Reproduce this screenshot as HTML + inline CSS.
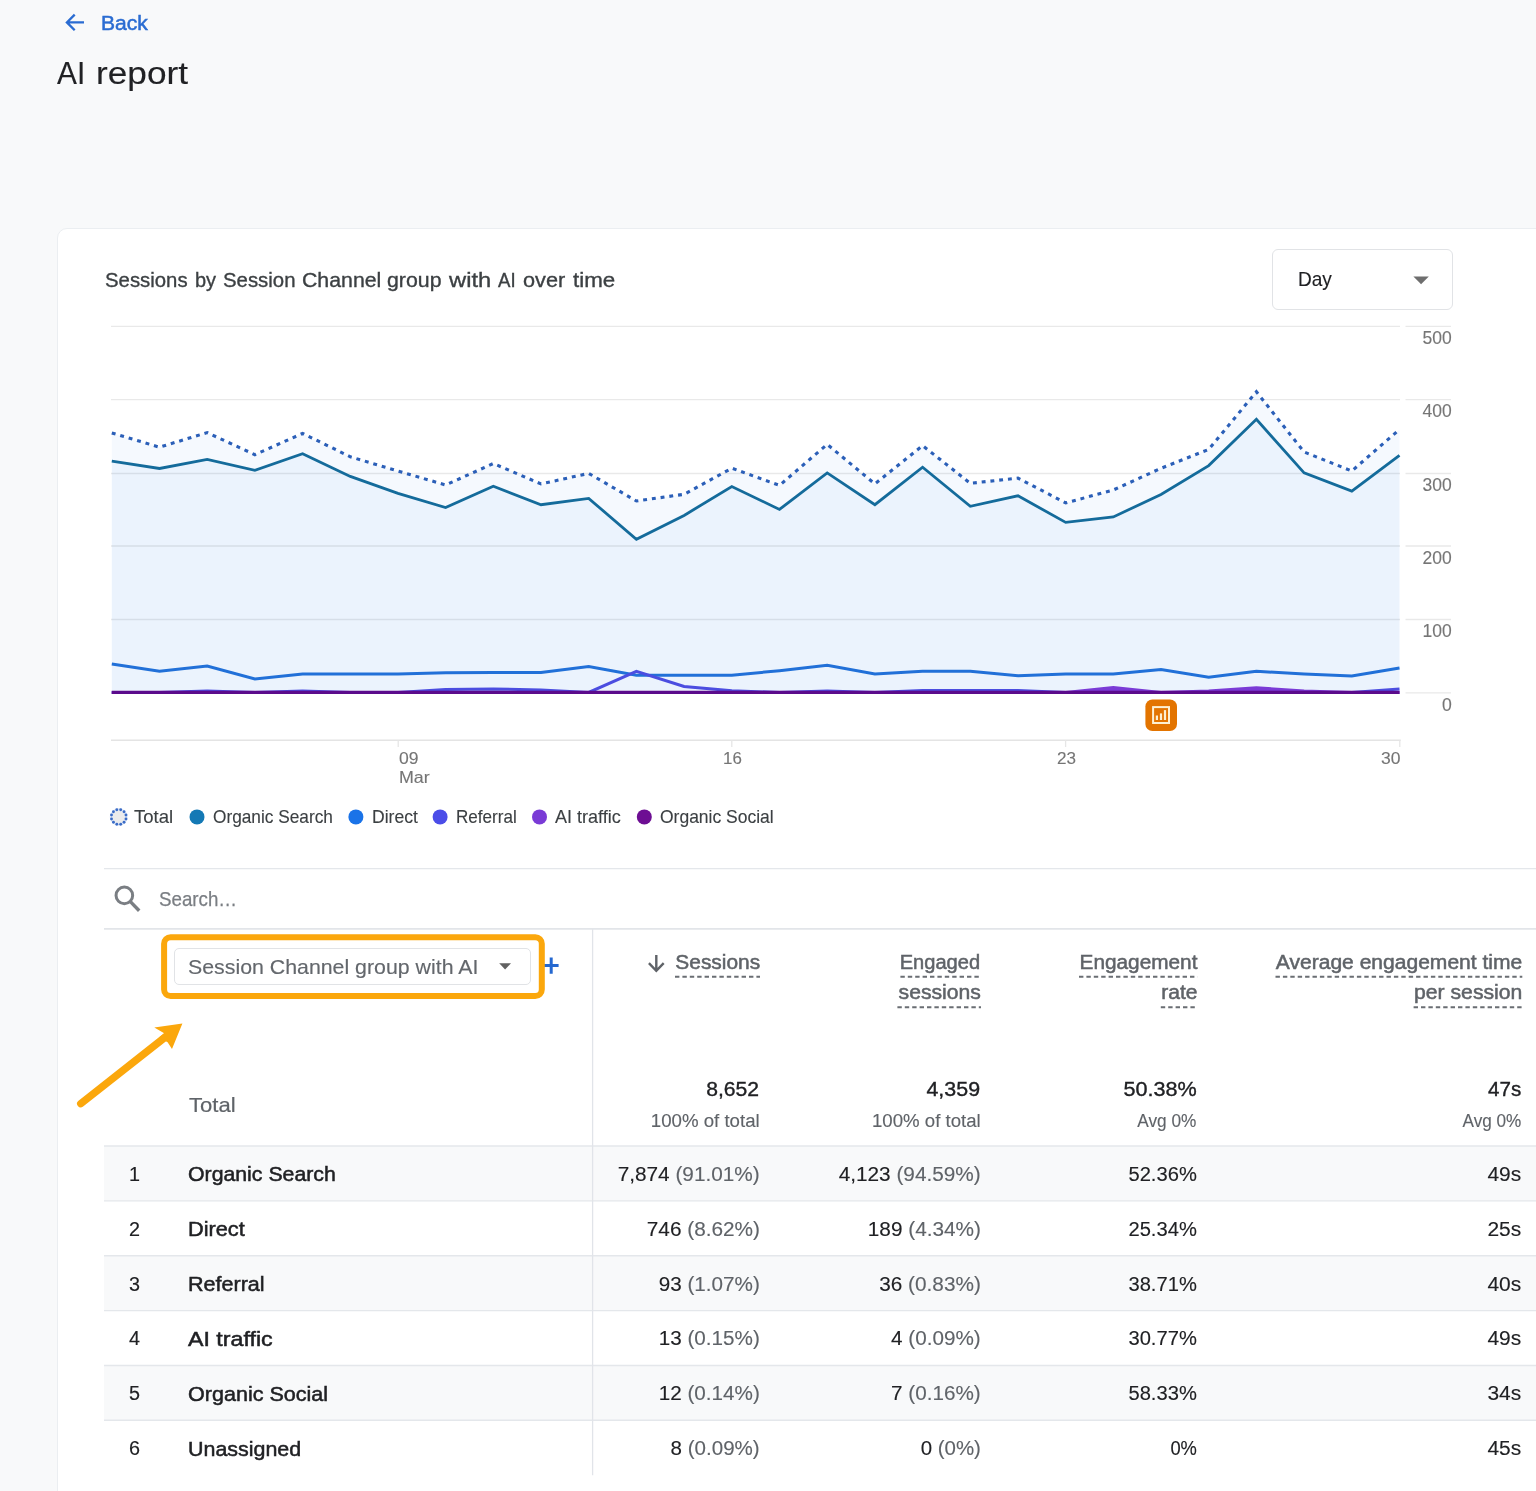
<!DOCTYPE html>
<html><head><meta charset="utf-8"><title>AI report</title>
<style>
html,body{margin:0;padding:0}
body{width:1536px;height:1491px;overflow:hidden;background:#f8f9fa;position:relative;font-family:"Liberation Sans", Arial, sans-serif}
.abs{position:absolute}
.t{position:absolute;white-space:pre}
.card{position:absolute;left:57px;top:227.5px;width:1600px;height:1400px;background:#fff;border:1.7px solid #ebeef1;border-radius:10px;box-sizing:border-box}
.day{position:absolute;left:1272px;top:249.4px;width:180.8px;height:60.3px;box-sizing:border-box;border:1.4px solid #e1e3e6;border-radius:6px;background:#fff}
.sel{position:absolute;left:173.6px;top:947.9px;width:357px;height:36.8px;box-sizing:border-box;border:1.3px solid #e1e3e6;border-radius:5px;background:#fff}
</style></head><body>
<div class="card"></div>
<div class="day"></div>
<svg class="abs" style="left:0;top:0" width="1536" height="1491" viewBox="0 0 1536 1491"><rect x="104" y="1146.00" width="1440" height="54.86" fill="#f8f9fa"/>
<rect x="104" y="1255.72" width="1440" height="54.86" fill="#f8f9fa"/>
<rect x="104" y="1365.44" width="1440" height="54.86" fill="#f8f9fa"/>
<line x1="104" x2="1540" y1="1146.00" y2="1146.00" stroke="#e4e7eb" stroke-width="1.4"/>
<line x1="104" x2="1540" y1="1200.86" y2="1200.86" stroke="#e4e7eb" stroke-width="1.4"/>
<line x1="104" x2="1540" y1="1255.72" y2="1255.72" stroke="#e4e7eb" stroke-width="1.4"/>
<line x1="104" x2="1540" y1="1310.58" y2="1310.58" stroke="#e4e7eb" stroke-width="1.4"/>
<line x1="104" x2="1540" y1="1365.44" y2="1365.44" stroke="#e4e7eb" stroke-width="1.4"/>
<line x1="104" x2="1540" y1="1420.30" y2="1420.30" stroke="#e4e7eb" stroke-width="1.4"/>
<line x1="104" x2="1540" y1="868.6" y2="868.6" stroke="#e4e7eb" stroke-width="1.4"/>
<line x1="104" x2="1540" y1="928.9" y2="928.9" stroke="#e2e5e9" stroke-width="1.7"/>
<line x1="592.6" x2="592.6" y1="929" y2="1475.2" stroke="#e1e4e9" stroke-width="1.3"/></svg>
<div class="sel"></div>
<svg class="abs" style="left:0;top:0" width="1536" height="1491" viewBox="0 0 1536 1491">
<line x1="111" x2="1400" y1="326.3" y2="326.3" stroke="#e9e9e9" stroke-width="1.3"/>
<line x1="1405.5" x2="1451" y1="326.3" y2="326.3" stroke="#e9e9e9" stroke-width="1.3"/>
<line x1="111" x2="1400" y1="399.7" y2="399.7" stroke="#e9e9e9" stroke-width="1.3"/>
<line x1="1405.5" x2="1451" y1="399.7" y2="399.7" stroke="#e9e9e9" stroke-width="1.3"/>
<line x1="111" x2="1400" y1="473.5" y2="473.5" stroke="#e9e9e9" stroke-width="1.3"/>
<line x1="1405.5" x2="1451" y1="473.5" y2="473.5" stroke="#e9e9e9" stroke-width="1.3"/>
<line x1="111" x2="1400" y1="546.0" y2="546.0" stroke="#e9e9e9" stroke-width="1.3"/>
<line x1="1405.5" x2="1451" y1="546.0" y2="546.0" stroke="#e9e9e9" stroke-width="1.3"/>
<line x1="111" x2="1400" y1="619.5" y2="619.5" stroke="#e9e9e9" stroke-width="1.3"/>
<line x1="1405.5" x2="1451" y1="619.5" y2="619.5" stroke="#e9e9e9" stroke-width="1.3"/>
<line x1="111" x2="1400" y1="692.9" y2="692.9" stroke="#e9e9e9" stroke-width="1.3"/>
<line x1="1405.5" x2="1451" y1="692.9" y2="692.9" stroke="#e9e9e9" stroke-width="1.3"/>
<path d="M111.8,692.4 L111.8,432.9 L159.5,447.2 L207.2,432.6 L254.9,454.7 L302.6,433.4 L350.3,456.8 L398.0,471.0 L445.6,485.0 L493.3,463.5 L541.0,483.9 L588.7,473.4 L636.4,501.0 L684.1,494.3 L731.8,468.2 L779.5,485.4 L827.2,444.3 L874.9,483.9 L922.6,445.6 L970.3,483.3 L1018.0,478.1 L1065.7,502.9 L1113.3,490.0 L1161.0,468.3 L1208.7,449.4 L1256.4,391.8 L1304.1,452.0 L1351.8,471.0 L1399.5,429.4 L1399.5,692.4 Z" fill="#1a73e8" fill-opacity="0.042"/>
<path d="M111.8,692.4 L111.8,461.2 L159.5,468.5 L207.2,459.4 L254.9,470.4 L302.6,453.7 L350.3,476.4 L398.0,493.3 L445.6,507.5 L493.3,486.3 L541.0,504.7 L588.7,498.4 L636.4,539.3 L684.1,515.4 L731.8,486.5 L779.5,509.4 L827.2,472.9 L874.9,504.7 L922.6,467.2 L970.3,506.3 L1018.0,495.8 L1065.7,522.4 L1113.3,517.0 L1161.0,494.4 L1208.7,465.6 L1256.4,419.3 L1304.1,472.9 L1351.8,491.1 L1399.5,455.4 L1399.5,692.4 Z" fill="#1a73e8" fill-opacity="0.042"/>
<line x1="111" x2="1400.8" y1="740.3" y2="740.3" stroke="#e4e4e4" stroke-width="1.5"/>
<line x1="398.2" x2="398.2" y1="740" y2="747" stroke="#e6e6e6" stroke-width="1.3"/>
<line x1="731.8" x2="731.8" y1="740" y2="747" stroke="#e6e6e6" stroke-width="1.3"/>
<line x1="1065.6" x2="1065.6" y1="740" y2="747" stroke="#e6e6e6" stroke-width="1.3"/>
<line x1="1399.8" x2="1399.8" y1="740" y2="747" stroke="#e6e6e6" stroke-width="1.3"/>
<polyline points="111.8,432.9 159.5,447.2 207.2,432.6 254.9,454.7 302.6,433.4 350.3,456.8 398.0,471.0 445.6,485.0 493.3,463.5 541.0,483.9 588.7,473.4 636.4,501.0 684.1,494.3 731.8,468.2 779.5,485.4 827.2,444.3 874.9,483.9 922.6,445.6 970.3,483.3 1018.0,478.1 1065.7,502.9 1113.3,490.0 1161.0,468.3 1208.7,449.4 1256.4,391.8 1304.1,452.0 1351.8,471.0 1399.5,429.4" fill="none" stroke="#2b5fb8" stroke-width="3.1" stroke-dasharray="3.9 4.9"/>
<polyline points="111.8,461.2 159.5,468.5 207.2,459.4 254.9,470.4 302.6,453.7 350.3,476.4 398.0,493.3 445.6,507.5 493.3,486.3 541.0,504.7 588.7,498.4 636.4,539.3 684.1,515.4 731.8,486.5 779.5,509.4 827.2,472.9 874.9,504.7 922.6,467.2 970.3,506.3 1018.0,495.8 1065.7,522.4 1113.3,517.0 1161.0,494.4 1208.7,465.6 1256.4,419.3 1304.1,472.9 1351.8,491.1 1399.5,455.4" fill="none" stroke="#146b9b" stroke-width="2.8" stroke-linejoin="miter"/>
<polyline points="111.8,664.0 159.5,671.3 207.2,666.0 254.9,679.0 302.6,673.9 350.3,673.9 398.0,673.9 445.6,672.7 493.3,672.5 541.0,672.5 588.7,666.6 636.4,675.2 684.1,675.2 731.8,675.2 779.5,670.7 827.2,665.3 874.9,673.9 922.6,671.3 970.3,671.3 1018.0,675.7 1065.7,673.9 1113.3,673.9 1161.0,669.4 1208.7,677.2 1256.4,671.3 1304.1,673.9 1351.8,675.9 1399.5,667.9" fill="none" stroke="#2170d8" stroke-width="3"/>
<polyline points="111.8,692.4 159.5,692.4 207.2,691.0 254.9,692.4 302.6,691.0 350.3,692.4 398.0,692.4 445.6,689.5 493.3,689.0 541.0,690.0 588.7,692.4 636.4,671.3 684.1,686.4 731.8,690.8 779.5,692.4 827.2,691.0 874.9,692.4 922.6,690.5 970.3,690.5 1018.0,690.5 1065.7,692.4 1113.3,692.4 1161.0,692.4 1208.7,692.4 1256.4,692.4 1304.1,692.4 1351.8,692.4 1399.5,689.0" fill="none" stroke="#4b4de0" stroke-width="3"/>
<polyline points="111.8,692.4 159.5,692.4 207.2,692.4 254.9,692.4 302.6,692.4 350.3,692.4 398.0,692.4 445.6,692.4 493.3,692.4 541.0,692.4 588.7,692.4 636.4,692.4 684.1,692.4 731.8,692.4 779.5,692.4 827.2,692.4 874.9,692.4 922.6,692.4 970.3,692.4 1018.0,692.4 1065.7,692.4 1113.3,687.6 1161.0,692.4 1208.7,691.0 1256.4,687.7 1304.1,691.0 1351.8,692.4 1399.5,692.4" fill="#7a3bd6" stroke="#7a3bd6" stroke-width="3"/>
<polyline points="111.8,692.4 159.5,692.4 207.2,692.4 254.9,692.4 302.6,692.4 350.3,692.4 398.0,692.4 445.6,692.4 493.3,692.4 541.0,692.4 588.7,692.4 636.4,692.4 684.1,692.4 731.8,692.4 779.5,692.4 827.2,692.4 874.9,692.4 922.6,692.4 970.3,692.4 1018.0,692.4 1065.7,692.4 1113.3,692.4 1161.0,692.4 1208.7,692.4 1256.4,692.4 1304.1,692.4 1351.8,692.4 1399.5,692.4" fill="none" stroke="#5b0b8c" stroke-width="3.3"/>
<rect x="1145.4" y="699.4" width="31.6" height="31.6" rx="7" fill="#e37400"/>
<rect x="1153.1" y="707.1" width="15.9" height="15.9" fill="none" stroke="#fdf0d2" stroke-width="2"/>
<rect x="1155.8" y="715.5" width="2.2" height="4.5" fill="#fdf0d2"/><rect x="1159.9" y="713.4" width="2.2" height="6.6" fill="#fdf0d2"/><rect x="1163.9" y="710.1" width="2.2" height="9.9" fill="#fdf0d2"/>
<circle cx="118.75" cy="817" r="9" fill="#e4ebf8"/><circle cx="118.75" cy="817" r="6.2" fill="#ebebec"/>
<circle cx="125.99" cy="818.94" r="1.45" fill="#3b6cc6"/>
<circle cx="124.05" cy="822.30" r="1.45" fill="#3b6cc6"/>
<circle cx="120.69" cy="824.24" r="1.45" fill="#3b6cc6"/>
<circle cx="116.81" cy="824.24" r="1.45" fill="#3b6cc6"/>
<circle cx="113.45" cy="822.30" r="1.45" fill="#3b6cc6"/>
<circle cx="111.51" cy="818.94" r="1.45" fill="#3b6cc6"/>
<circle cx="111.51" cy="815.06" r="1.45" fill="#3b6cc6"/>
<circle cx="113.45" cy="811.70" r="1.45" fill="#3b6cc6"/>
<circle cx="116.81" cy="809.76" r="1.45" fill="#3b6cc6"/>
<circle cx="120.69" cy="809.76" r="1.45" fill="#3b6cc6"/>
<circle cx="124.05" cy="811.70" r="1.45" fill="#3b6cc6"/>
<circle cx="125.99" cy="815.06" r="1.45" fill="#3b6cc6"/>
<circle cx="197.0" cy="816.9" r="7.5" fill="#1479b5"/>
<circle cx="355.9" cy="816.9" r="7.5" fill="#1a73e8"/>
<circle cx="440.1" cy="816.9" r="7.5" fill="#4b4de8"/>
<circle cx="539.5" cy="816.9" r="7.5" fill="#7a3bd6"/>
<circle cx="644.3" cy="816.9" r="7.5" fill="#6d0e93"/>
<path d="M1413.4 276.4 L1428.8 276.4 L1421.1 284.2 Z" fill="#6e6e6e"/>
<path d="M84 22.4 H67.5 M74.7 14.6 L66.9 22.4 L74.7 30.2" fill="none" stroke="#2a6cd2" stroke-width="2.3"/>
<circle cx="124.35" cy="895.4" r="8.3" fill="none" stroke="#7a7e83" stroke-width="3"/><path d="M130.4 901.6 L139.2 910.8" stroke="#7a7e83" stroke-width="3.4" stroke-linecap="butt"/>
<path d="M499.2 963.3 L511 963.3 L505.1 969.4 Z" fill="#616161"/>
<path d="M544 965.4 H558.6 M551.2 957.5 V973.8" stroke="#2568d0" stroke-width="3"/>
<path d="M656.3 955 V970 M648.9 963.2 L656.3 970.8 L663.7 963.2" fill="none" stroke="#5f6368" stroke-width="2.4"/>
<line x1="675.0" x2="760.0" y1="976.8" y2="976.8" stroke="#6a6e73" stroke-width="1.9" stroke-dasharray="4.4 3"/>
<line x1="900.4" x2="981.0" y1="976.8" y2="976.8" stroke="#6a6e73" stroke-width="1.9" stroke-dasharray="4.4 3"/>
<line x1="897.4" x2="981.0" y1="1007.2" y2="1007.2" stroke="#6a6e73" stroke-width="1.9" stroke-dasharray="4.4 3"/>
<line x1="1079.0" x2="1197.5" y1="976.8" y2="976.8" stroke="#6a6e73" stroke-width="1.9" stroke-dasharray="4.4 3"/>
<line x1="1160.8" x2="1197.5" y1="1007.2" y2="1007.2" stroke="#6a6e73" stroke-width="1.9" stroke-dasharray="4.4 3"/>
<line x1="1275.5" x2="1522.3" y1="976.8" y2="976.8" stroke="#6a6e73" stroke-width="1.9" stroke-dasharray="4.4 3"/>
<line x1="1413.6" x2="1522.3" y1="1007.2" y2="1007.2" stroke="#6a6e73" stroke-width="1.9" stroke-dasharray="4.4 3"/>
<rect x="164.1" y="937.2" width="377.7" height="58.8" rx="6.5" fill="none" stroke="#fba70c" stroke-width="6"/>
<path d="M80.8 1103.6 L166 1036.5" stroke="#fba70c" stroke-width="7.5" stroke-linecap="round"/>
<path d="M182.4 1023.4 L154.3 1027.6 L164.2 1033.2 L159 1037.5 L167.6 1042.3 L172 1049 Z" fill="#fba70c"/>
</svg>
<div style="position:absolute;left:0;top:0;width:1536px;height:1491px;will-change:transform">
<span class="t" style="top:10.77px;font-size:20px;line-height:24px;color:#2a6cd2;left:101.20px;transform-origin:0 50%;transform:scaleX(1.0524);-webkit-text-stroke:0.5px #2a6cd2;">Back</span>
<span class="t" style="top:55.36px;font-size:31px;line-height:37px;color:#202124;left:57.20px;transform-origin:0 50%;transform:scaleX(0.9626);-webkit-text-stroke:0.12px #202124;">AI</span>
<span class="t" style="top:55.36px;font-size:31px;line-height:37px;color:#202124;left:96.20px;transform-origin:0 50%;transform:scaleX(1.1360);-webkit-text-stroke:0.12px #202124;">report</span>
<span class="t" style="top:266.89px;font-size:20.8px;line-height:25px;color:#3c4043;left:104.90px;transform-origin:0 50%;transform:scaleX(0.9788);-webkit-text-stroke:0.35px #3c4043;">Sessions</span>
<span class="t" style="top:266.89px;font-size:20.8px;line-height:25px;color:#3c4043;left:194.90px;transform-origin:0 50%;transform:scaleX(0.9605);-webkit-text-stroke:0.35px #3c4043;">by</span>
<span class="t" style="top:266.89px;font-size:20.8px;line-height:25px;color:#3c4043;left:223.00px;transform-origin:0 50%;transform:scaleX(0.9797);-webkit-text-stroke:0.35px #3c4043;">Session</span>
<span class="t" style="top:266.89px;font-size:20.8px;line-height:25px;color:#3c4043;left:302.10px;transform-origin:0 50%;transform:scaleX(1.0234);-webkit-text-stroke:0.35px #3c4043;">Channel</span>
<span class="t" style="top:266.89px;font-size:20.8px;line-height:25px;color:#3c4043;left:387.20px;transform-origin:0 50%;transform:scaleX(1.0244);-webkit-text-stroke:0.35px #3c4043;">group</span>
<span class="t" style="top:266.89px;font-size:20.8px;line-height:25px;color:#3c4043;left:448.80px;transform-origin:0 50%;transform:scaleX(1.1410);-webkit-text-stroke:0.35px #3c4043;">with</span>
<span class="t" style="top:266.89px;font-size:20.8px;line-height:25px;color:#3c4043;left:498.00px;transform-origin:0 50%;transform:scaleX(0.8954);-webkit-text-stroke:0.35px #3c4043;">AI</span>
<span class="t" style="top:266.89px;font-size:20.8px;line-height:25px;color:#3c4043;left:522.60px;transform-origin:0 50%;transform:scaleX(1.0428);-webkit-text-stroke:0.35px #3c4043;">over</span>
<span class="t" style="top:266.89px;font-size:20.8px;line-height:25px;color:#3c4043;left:572.70px;transform-origin:0 50%;transform:scaleX(1.0739);-webkit-text-stroke:0.35px #3c4043;">time</span>
<span class="t" style="top:267.13px;font-size:20.4px;line-height:24px;color:#202124;left:1297.50px;transform-origin:0 50%;transform:scaleX(0.9348);-webkit-text-stroke:0.12px #202124;">Day</span>
<span class="t" style="top:327.73px;font-size:17.8px;line-height:21px;color:#757575;right:84.00px;transform-origin:100% 50%;transform:scaleX(0.9841);-webkit-text-stroke:0.12px #757575;">500</span>
<span class="t" style="top:401.43px;font-size:17.8px;line-height:21px;color:#757575;right:84.00px;transform-origin:100% 50%;transform:scaleX(0.9841);-webkit-text-stroke:0.12px #757575;">400</span>
<span class="t" style="top:475.23px;font-size:17.8px;line-height:21px;color:#757575;right:84.00px;transform-origin:100% 50%;transform:scaleX(0.9841);-webkit-text-stroke:0.12px #757575;">300</span>
<span class="t" style="top:547.73px;font-size:17.8px;line-height:21px;color:#757575;right:84.00px;transform-origin:100% 50%;transform:scaleX(0.9841);-webkit-text-stroke:0.12px #757575;">200</span>
<span class="t" style="top:621.23px;font-size:17.8px;line-height:21px;color:#757575;right:84.00px;transform-origin:100% 50%;transform:scaleX(0.9841);-webkit-text-stroke:0.12px #757575;">100</span>
<span class="t" style="top:694.63px;font-size:17.8px;line-height:21px;color:#757575;right:84.00px;transform-origin:100% 50%;transform:scaleX(0.9908);-webkit-text-stroke:0.12px #757575;">0</span>
<span class="t" style="top:748.08px;font-size:16.5px;line-height:20px;color:#757575;left:398.75px;transform-origin:0 50%;transform:scaleX(1.0649);-webkit-text-stroke:0.12px #757575;">09</span>
<span class="t" style="top:748.08px;font-size:16.5px;line-height:20px;color:#757575;left:723.20px;transform-origin:0 50%;transform:scaleX(1.0240);-webkit-text-stroke:0.12px #757575;">16</span>
<span class="t" style="top:748.08px;font-size:16.5px;line-height:20px;color:#757575;left:1056.60px;transform-origin:0 50%;transform:scaleX(1.0349);-webkit-text-stroke:0.12px #757575;">23</span>
<span class="t" style="top:748.08px;font-size:16.5px;line-height:20px;color:#757575;left:1380.50px;transform-origin:0 50%;transform:scaleX(1.0621);-webkit-text-stroke:0.12px #757575;">30</span>
<span class="t" style="top:766.98px;font-size:16.5px;line-height:20px;color:#757575;left:398.75px;transform-origin:0 50%;transform:scaleX(1.0819);-webkit-text-stroke:0.12px #757575;">Mar</span>
<span class="t" style="top:805.69px;font-size:18.5px;line-height:22px;color:#3c4043;left:134.30px;transform-origin:0 50%;transform:scaleX(1.0031);-webkit-text-stroke:0.12px #3c4043;">Total</span>
<span class="t" style="top:805.69px;font-size:18.5px;line-height:22px;color:#3c4043;left:212.90px;transform-origin:0 50%;transform:scaleX(0.9327);-webkit-text-stroke:0.12px #3c4043;">Organic Search</span>
<span class="t" style="top:805.69px;font-size:18.5px;line-height:22px;color:#3c4043;left:371.80px;transform-origin:0 50%;transform:scaleX(0.9480);-webkit-text-stroke:0.12px #3c4043;">Direct</span>
<span class="t" style="top:805.69px;font-size:18.5px;line-height:22px;color:#3c4043;left:456.10px;transform-origin:0 50%;transform:scaleX(0.9223);-webkit-text-stroke:0.12px #3c4043;">Referral</span>
<span class="t" style="top:805.69px;font-size:18.5px;line-height:22px;color:#3c4043;left:555.40px;transform-origin:0 50%;transform:scaleX(0.9746);-webkit-text-stroke:0.12px #3c4043;">AI traffic</span>
<span class="t" style="top:805.69px;font-size:18.5px;line-height:22px;color:#3c4043;left:660.40px;transform-origin:0 50%;transform:scaleX(0.9450);-webkit-text-stroke:0.12px #3c4043;">Organic Social</span>
<span class="t" style="top:886.02px;font-size:21px;line-height:25px;color:#7a7e83;left:158.60px;transform-origin:0 50%;transform:scaleX(0.8921);-webkit-text-stroke:0.25px #7a7e83;">Search…</span>
<span class="t" style="top:953.69px;font-size:20.8px;line-height:25px;color:#63676c;left:187.90px;transform-origin:0 50%;transform:scaleX(1.0252);-webkit-text-stroke:0.15px #63676c;">Session Channel group with AI</span>
<span class="t" style="top:950.17px;font-size:20px;line-height:24px;color:#5f6368;right:776.00px;transform-origin:100% 50%;transform:scaleX(1.0449);-webkit-text-stroke:0.5px #5f6368;">Sessions</span>
<span class="t" style="top:950.17px;font-size:20px;line-height:24px;color:#5f6368;right:555.50px;transform-origin:100% 50%;transform:scaleX(1.0040);-webkit-text-stroke:0.5px #5f6368;">Engaged</span>
<span class="t" style="top:950.17px;font-size:20px;line-height:24px;color:#5f6368;right:338.70px;transform-origin:100% 50%;transform:scaleX(1.0395);-webkit-text-stroke:0.5px #5f6368;">Engagement</span>
<span class="t" style="top:950.17px;font-size:20px;line-height:24px;color:#5f6368;right:13.90px;transform-origin:100% 50%;transform:scaleX(1.0519);-webkit-text-stroke:0.5px #5f6368;">Average engagement time</span>
<span class="t" style="top:980.47px;font-size:20px;line-height:24px;color:#5f6368;right:555.50px;transform-origin:100% 50%;transform:scaleX(1.0564);-webkit-text-stroke:0.5px #5f6368;">sessions</span>
<span class="t" style="top:980.47px;font-size:20px;line-height:24px;color:#5f6368;right:338.70px;transform-origin:100% 50%;transform:scaleX(1.0531);-webkit-text-stroke:0.5px #5f6368;">rate</span>
<span class="t" style="top:980.47px;font-size:20px;line-height:24px;color:#5f6368;right:13.90px;transform-origin:100% 50%;transform:scaleX(1.0579);-webkit-text-stroke:0.5px #5f6368;">per session</span>
<span class="t" style="top:1076.87px;font-size:20px;line-height:24px;color:#202124;right:776.80px;transform-origin:100% 50%;transform:scaleX(1.0567);-webkit-text-stroke:0.35px #202124;">8,652</span>
<span class="t" style="top:1076.87px;font-size:20px;line-height:24px;color:#202124;right:555.80px;transform-origin:100% 50%;transform:scaleX(1.0707);-webkit-text-stroke:0.35px #202124;">4,359</span>
<span class="t" style="top:1076.87px;font-size:20px;line-height:24px;color:#202124;right:339.40px;transform-origin:100% 50%;transform:scaleX(1.0804);-webkit-text-stroke:0.35px #202124;">50.38%</span>
<span class="t" style="top:1076.87px;font-size:20px;line-height:24px;color:#202124;right:14.90px;transform-origin:100% 50%;transform:scaleX(1.0295);-webkit-text-stroke:0.35px #202124;">47s</span>
<span class="t" style="top:1091.72px;font-size:21px;line-height:25px;color:#5f6368;left:188.90px;transform-origin:0 50%;transform:scaleX(1.0505);-webkit-text-stroke:0.2px #5f6368;">Total</span>
<span class="t" style="top:1111.00px;font-size:17.6px;line-height:21px;color:#5f6368;right:776.80px;transform-origin:100% 50%;transform:scaleX(1.0603);-webkit-text-stroke:0.12px #5f6368;">100% of total</span>
<span class="t" style="top:1111.00px;font-size:17.6px;line-height:21px;color:#5f6368;right:555.80px;transform-origin:100% 50%;transform:scaleX(1.0584);-webkit-text-stroke:0.12px #5f6368;">100% of total</span>
<span class="t" style="top:1111.00px;font-size:17.6px;line-height:21px;color:#5f6368;right:339.40px;transform-origin:100% 50%;transform:scaleX(0.9796);-webkit-text-stroke:0.12px #5f6368;">Avg 0%</span>
<span class="t" style="top:1111.00px;font-size:17.6px;line-height:21px;color:#5f6368;right:14.90px;transform-origin:100% 50%;transform:scaleX(0.9747);-webkit-text-stroke:0.12px #5f6368;">Avg 0%</span>
<span class="t" style="top:1161.87px;font-size:20px;line-height:24px;color:#202124;left:128.60px;transform-origin:0 50%;transform:scaleX(0.9888);-webkit-text-stroke:0.15px #202124;">1</span>
<span class="t" style="top:1161.20px;font-size:20.5px;line-height:25px;color:#202124;left:188.20px;transform-origin:0 50%;transform:scaleX(1.0376);-webkit-text-stroke:0.5px #202124;">Organic Search</span>
<span class="t" style="top:1161.87px;font-size:20px;line-height:24px;color:#202124;right:776.50px;transform-origin:100% 50%;transform:scaleX(1.0390);-webkit-text-stroke:0.12px #202124;">7,874 <span style="color:#5f6368;-webkit-text-stroke-color:#5f6368">(91.01%)</span></span>
<span class="t" style="top:1161.87px;font-size:20px;line-height:24px;color:#202124;right:555.50px;transform-origin:100% 50%;transform:scaleX(1.0390);-webkit-text-stroke:0.12px #202124;">4,123 <span style="color:#5f6368;-webkit-text-stroke-color:#5f6368">(94.59%)</span></span>
<span class="t" style="top:1161.87px;font-size:20px;line-height:24px;color:#202124;right:339.20px;transform-origin:100% 50%;transform:scaleX(1.0082);-webkit-text-stroke:0.12px #202124;">52.36%</span>
<span class="t" style="top:1161.87px;font-size:20px;line-height:24px;color:#202124;right:14.90px;transform-origin:100% 50%;transform:scaleX(1.0481);-webkit-text-stroke:0.12px #202124;">49s</span>
<span class="t" style="top:1216.73px;font-size:20px;line-height:24px;color:#202124;left:128.60px;transform-origin:0 50%;transform:scaleX(0.9888);-webkit-text-stroke:0.15px #202124;">2</span>
<span class="t" style="top:1216.06px;font-size:20.5px;line-height:25px;color:#202124;left:188.20px;transform-origin:0 50%;transform:scaleX(1.0608);-webkit-text-stroke:0.5px #202124;">Direct</span>
<span class="t" style="top:1216.73px;font-size:20px;line-height:24px;color:#202124;right:776.50px;transform-origin:100% 50%;transform:scaleX(1.0388);-webkit-text-stroke:0.12px #202124;">746 <span style="color:#5f6368;-webkit-text-stroke-color:#5f6368">(8.62%)</span></span>
<span class="t" style="top:1216.73px;font-size:20px;line-height:24px;color:#202124;right:555.50px;transform-origin:100% 50%;transform:scaleX(1.0388);-webkit-text-stroke:0.12px #202124;">189 <span style="color:#5f6368;-webkit-text-stroke-color:#5f6368">(4.34%)</span></span>
<span class="t" style="top:1216.73px;font-size:20px;line-height:24px;color:#202124;right:339.20px;transform-origin:100% 50%;transform:scaleX(1.0082);-webkit-text-stroke:0.12px #202124;">25.34%</span>
<span class="t" style="top:1216.73px;font-size:20px;line-height:24px;color:#202124;right:14.90px;transform-origin:100% 50%;transform:scaleX(1.0481);-webkit-text-stroke:0.12px #202124;">25s</span>
<span class="t" style="top:1271.59px;font-size:20px;line-height:24px;color:#202124;left:128.60px;transform-origin:0 50%;transform:scaleX(0.9888);-webkit-text-stroke:0.15px #202124;">3</span>
<span class="t" style="top:1270.92px;font-size:20.5px;line-height:25px;color:#202124;left:188.20px;transform-origin:0 50%;transform:scaleX(1.0504);-webkit-text-stroke:0.5px #202124;">Referral</span>
<span class="t" style="top:1271.59px;font-size:20px;line-height:24px;color:#202124;right:776.50px;transform-origin:100% 50%;transform:scaleX(1.0333);-webkit-text-stroke:0.12px #202124;">93 <span style="color:#5f6368;-webkit-text-stroke-color:#5f6368">(1.07%)</span></span>
<span class="t" style="top:1271.59px;font-size:20px;line-height:24px;color:#202124;right:555.50px;transform-origin:100% 50%;transform:scaleX(1.0384);-webkit-text-stroke:0.12px #202124;">36 <span style="color:#5f6368;-webkit-text-stroke-color:#5f6368">(0.83%)</span></span>
<span class="t" style="top:1271.59px;font-size:20px;line-height:24px;color:#202124;right:339.20px;transform-origin:100% 50%;transform:scaleX(1.0082);-webkit-text-stroke:0.12px #202124;">38.71%</span>
<span class="t" style="top:1271.59px;font-size:20px;line-height:24px;color:#202124;right:14.90px;transform-origin:100% 50%;transform:scaleX(1.0481);-webkit-text-stroke:0.12px #202124;">40s</span>
<span class="t" style="top:1326.45px;font-size:20px;line-height:24px;color:#202124;left:128.60px;transform-origin:0 50%;transform:scaleX(0.9888);-webkit-text-stroke:0.15px #202124;">4</span>
<span class="t" style="top:1325.78px;font-size:20.5px;line-height:25px;color:#202124;left:188.20px;transform-origin:0 50%;transform:scaleX(1.1319);-webkit-text-stroke:0.5px #202124;">AI traffic</span>
<span class="t" style="top:1326.45px;font-size:20px;line-height:24px;color:#202124;right:776.50px;transform-origin:100% 50%;transform:scaleX(1.0333);-webkit-text-stroke:0.12px #202124;">13 <span style="color:#5f6368;-webkit-text-stroke-color:#5f6368">(0.15%)</span></span>
<span class="t" style="top:1326.45px;font-size:20px;line-height:24px;color:#202124;right:555.50px;transform-origin:100% 50%;transform:scaleX(1.0332);-webkit-text-stroke:0.12px #202124;">4 <span style="color:#5f6368;-webkit-text-stroke-color:#5f6368">(0.09%)</span></span>
<span class="t" style="top:1326.45px;font-size:20px;line-height:24px;color:#202124;right:339.20px;transform-origin:100% 50%;transform:scaleX(1.0082);-webkit-text-stroke:0.12px #202124;">30.77%</span>
<span class="t" style="top:1326.45px;font-size:20px;line-height:24px;color:#202124;right:14.90px;transform-origin:100% 50%;transform:scaleX(1.0481);-webkit-text-stroke:0.12px #202124;">49s</span>
<span class="t" style="top:1381.31px;font-size:20px;line-height:24px;color:#202124;left:128.60px;transform-origin:0 50%;transform:scaleX(0.9888);-webkit-text-stroke:0.15px #202124;">5</span>
<span class="t" style="top:1380.64px;font-size:20.5px;line-height:25px;color:#202124;left:188.20px;transform-origin:0 50%;transform:scaleX(1.0509);-webkit-text-stroke:0.5px #202124;">Organic Social</span>
<span class="t" style="top:1381.31px;font-size:20px;line-height:24px;color:#202124;right:776.50px;transform-origin:100% 50%;transform:scaleX(1.0333);-webkit-text-stroke:0.12px #202124;">12 <span style="color:#5f6368;-webkit-text-stroke-color:#5f6368">(0.14%)</span></span>
<span class="t" style="top:1381.31px;font-size:20px;line-height:24px;color:#202124;right:555.50px;transform-origin:100% 50%;transform:scaleX(1.0332);-webkit-text-stroke:0.12px #202124;">7 <span style="color:#5f6368;-webkit-text-stroke-color:#5f6368">(0.16%)</span></span>
<span class="t" style="top:1381.31px;font-size:20px;line-height:24px;color:#202124;right:339.20px;transform-origin:100% 50%;transform:scaleX(1.0082);-webkit-text-stroke:0.12px #202124;">58.33%</span>
<span class="t" style="top:1381.31px;font-size:20px;line-height:24px;color:#202124;right:14.90px;transform-origin:100% 50%;transform:scaleX(1.0481);-webkit-text-stroke:0.12px #202124;">34s</span>
<span class="t" style="top:1436.17px;font-size:20px;line-height:24px;color:#202124;left:128.60px;transform-origin:0 50%;transform:scaleX(0.9888);-webkit-text-stroke:0.15px #202124;">6</span>
<span class="t" style="top:1435.50px;font-size:20.5px;line-height:25px;color:#202124;left:188.20px;transform-origin:0 50%;transform:scaleX(1.0456);-webkit-text-stroke:0.5px #202124;">Unassigned</span>
<span class="t" style="top:1436.17px;font-size:20px;line-height:24px;color:#202124;right:776.50px;transform-origin:100% 50%;transform:scaleX(1.0275);-webkit-text-stroke:0.12px #202124;">8 <span style="color:#5f6368;-webkit-text-stroke-color:#5f6368">(0.09%)</span></span>
<span class="t" style="top:1436.17px;font-size:20px;line-height:24px;color:#202124;right:555.50px;transform-origin:100% 50%;transform:scaleX(1.0220);-webkit-text-stroke:0.12px #202124;">0 <span style="color:#5f6368;-webkit-text-stroke-color:#5f6368">(0%)</span></span>
<span class="t" style="top:1436.17px;font-size:20px;line-height:24px;color:#202124;right:339.20px;transform-origin:100% 50%;transform:scaleX(0.9168);-webkit-text-stroke:0.12px #202124;">0%</span>
<span class="t" style="top:1436.17px;font-size:20px;line-height:24px;color:#202124;right:14.90px;transform-origin:100% 50%;transform:scaleX(1.0481);-webkit-text-stroke:0.12px #202124;">45s</span>
</div>
</body></html>
